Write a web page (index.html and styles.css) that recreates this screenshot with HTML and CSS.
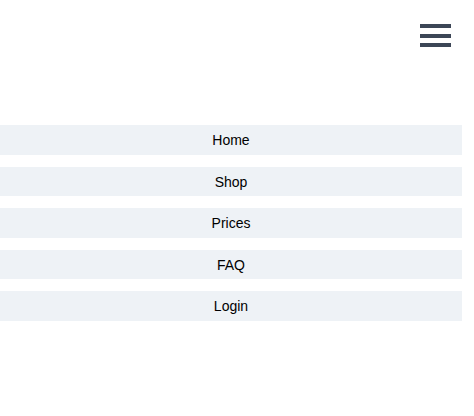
FILE: index.html
```html
<!DOCTYPE html>
<html>
<head>
<meta charset="utf-8">
<link rel="stylesheet" href="styles.css">
</head>
<body>
<header class="topbar">
  <button class="burger" aria-label="Menu">
    <span class="bar"></span>
    <span class="bar"></span>
    <span class="bar"></span>
  </button>
</header>
<nav class="menu">
  <a class="item" href="#">Home</a>
  <a class="item" href="#">Shop</a>
  <a class="item" href="#">Prices</a>
  <a class="item" href="#">FAQ</a>
  <a class="item" href="#">Login</a>
</nav>
</body>
</html>
```
FILE: styles.css
```css
html, body {
  margin: 0;
  padding: 0;
  background: #ffffff;
  font-family: "Liberation Sans", Arial, sans-serif;
}
.topbar {
  display: flex;
  justify-content: flex-end;
  align-items: flex-start;
  padding: 24px 23px 0 0;
  height: 125px;
  box-sizing: border-box;
}
.burger {
  display: flex;
  flex-direction: column;
  gap: 5.5px;
  width: 31px;
  padding: 0;
  border: 0;
  background: none;
}
.bar {
  display: block;
  width: 31px;
  height: 4px;
  background: #3c4656;
}
.menu {
  display: flex;
  flex-direction: column;
  gap: 12px;
  width: 462px;
}
.item {
  display: flex;
  align-items: center;
  justify-content: center;
  height: 29.5px;
  background: #eef2f6;
  color: #000000;
  font-size: 14px;
  padding-top: 1px;
  box-sizing: border-box;
  text-decoration: none;
}
```
